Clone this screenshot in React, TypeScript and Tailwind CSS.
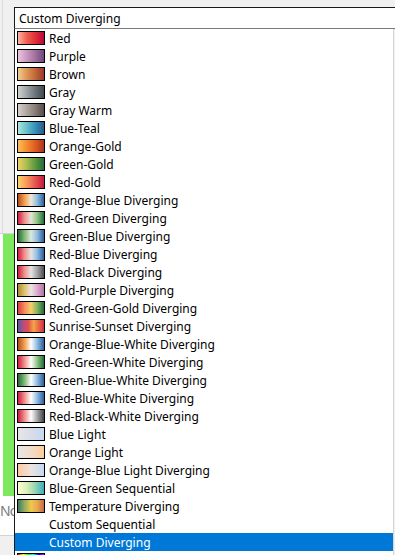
import React from "react";

type Ramp = { name: string; swatch?: string; selected?: boolean };

const ramps: Ramp[] = [
  { name: "Red", swatch: "bg-[linear-gradient(to_right,#fdb4a4,#f06050,#e03038,#b80838)]" },
  { name: "Purple", swatch: "bg-[linear-gradient(to_right,#ecc4e2,#c898c0,#a070a0,#6e4878)]" },
  { name: "Brown", swatch: "bg-[linear-gradient(to_right,#f2cc90,#dc9658,#c06838,#98382c)]" },
  { name: "Gray", swatch: "bg-[linear-gradient(to_right,#d0d2d2,#9ea4a8,#6c747a,#404850)]" },
  { name: "Gray Warm", swatch: "bg-[linear-gradient(to_right,#d8d0cc,#b0a6a2,#867c78,#544a4a)]" },
  { name: "Blue-Teal", swatch: "bg-[linear-gradient(to_right,#b0e4e0,#68c0cc,#3690b8,#2a5888)]" },
  { name: "Orange-Gold", swatch: "bg-[linear-gradient(to_right,#fac058,#f48c30,#e05c20,#a83420)]" },
  { name: "Green-Gold", swatch: "bg-[linear-gradient(to_right,#f2d064,#a8bc50,#5c9840,#226c3c)]" },
  { name: "Red-Gold", swatch: "bg-[linear-gradient(to_right,#fad468,#f8985c,#e65450,#c01c40)]" },
  { name: "Orange-Blue Diverging", swatch: "bg-[linear-gradient(to_right,#b84c1c,#f0a050,#f2e8d8,#88b8dc,#2c5e98)]" },
  { name: "Red-Green Diverging", swatch: "bg-[linear-gradient(to_right,#d01c40,#f0908c,#e4e4d8,#8cc080,#1e6c3a)]" },
  { name: "Green-Blue Diverging", swatch: "bg-[linear-gradient(to_right,#246c34,#80b878,#dce8dc,#8cb8e0,#2c5e98)]" },
  { name: "Red-Blue Diverging", swatch: "bg-[linear-gradient(to_right,#d01c40,#f0908c,#e8e4e4,#8cb8e0,#2c5e98)]" },
  { name: "Red-Black Diverging", swatch: "bg-[linear-gradient(to_right,#d01c40,#f0908c,#e4e4e4,#a0a0a0,#4a4e52)]" },
  { name: "Gold-Purple Diverging", swatch: "bg-[linear-gradient(to_right,#ae8a2c,#dcc470,#ece4e4,#dca8cc,#b070a8)]" },
  { name: "Red-Green-Gold Diverging", swatch: "bg-[linear-gradient(to_right,#e03c44,#f48c5c,#f4d068,#80b060,#1e6c3a)]" },
  { name: "Sunrise-Sunset Diverging", swatch: "bg-[linear-gradient(to_right,#4c5ca8,#b84c80,#e05050,#f4a448,#e86848,#c83040)]" },
  { name: "Orange-Blue-White Diverging", swatch: "bg-[linear-gradient(to_right,#b84c1c,#f0a050,#ffffff,#88b8dc,#2c5e98)]" },
  { name: "Red-Green-White Diverging", swatch: "bg-[linear-gradient(to_right,#d01c40,#f0908c,#ffffff,#8cc080,#1e6c3a)]" },
  { name: "Green-Blue-White Diverging", swatch: "bg-[linear-gradient(to_right,#246c34,#80b878,#ffffff,#8cb8e0,#2c5e98)]" },
  { name: "Red-Blue-White Diverging", swatch: "bg-[linear-gradient(to_right,#d01c40,#f0908c,#ffffff,#8cb8e0,#2c5e98)]" },
  { name: "Red-Black-White Diverging", swatch: "bg-[linear-gradient(to_right,#d01c40,#f0908c,#ffffff,#a0a0a0,#3c4044)]" },
  { name: "Blue Light", swatch: "bg-[linear-gradient(to_right,#e6e6e6,#d8dee8,#c4d8f2)]" },
  { name: "Orange Light", swatch: "bg-[linear-gradient(to_right,#e6e6e6,#f0dccc,#ffcc98)]" },
  { name: "Orange-Blue Light Diverging", swatch: "bg-[linear-gradient(to_right,#ffc8a0,#ece4dc,#c4d8f2)]" },
  { name: "Blue-Green Sequential", swatch: "bg-[linear-gradient(to_right,#fefed0,#dcf0b8,#94d4b4,#3cacbc)]" },
  { name: "Temperature Diverging", swatch: "bg-[linear-gradient(to_right,#3c7a64,#92ac60,#ecca48,#e8a650,#c46a44)]" },
  { name: "Custom Sequential" },
  { name: "Custom Diverging", selected: true },
];

const App: React.FC = () => {
  return (
    <div className="w-[395px] h-[555px] overflow-hidden bg-[#f0f0f0] flex font-['Noto_Sans',sans-serif] text-[12px] leading-none text-black">
      {/* Panel behind the popup */}
      <div className="w-[14px] shrink-0 flex flex-col">
        <div className="h-[233px] pl-[2px]">
          <div className="h-full border-l border-[#dcdcdc]" />
        </div>
        <div className="h-[303px] bg-white border-t border-b border-[#d2d2d2] flex flex-col">
          <div className="ml-[3px] h-[262px] bg-[#7ee85f]" />
          <div className="mt-[8px] text-[14px] tracking-[-1px] text-[#7a7a7a] whitespace-nowrap">No</div>
        </div>
        <div className="flex-1" />
      </div>

      {/* Combo box with open list */}
      <div className="flex-1 pt-[7px] flex flex-col min-w-0">
        <div className="h-[22px] shrink-0 bg-white border-t border-l border-t-[#1a1a1a] border-l-[#1a1a1a] border-b border-b-[#7a7a7a] flex items-center pl-[4px] pt-[2px]">
          Custom Diverging
        </div>
        <div className="mr-[1px] bg-white border-l border-[#1a1a1a] border-r border-r-[#d6d6d6] flex flex-col">
          {ramps.map((r) => (
            <div
              key={r.name}
              className={`h-[18px] shrink-0 flex items-center pl-[2px] whitespace-nowrap ${
                r.selected ? "bg-[#0078d7] text-white" : ""
              }`}
            >
              {r.swatch ? (
                <span className={`w-[28px] h-[14px] shrink-0 border border-black ${r.swatch}`} />
              ) : (
                <span className="w-[28px] h-[14px] shrink-0" />
              )}
              <span className="ml-[4px] pt-[2px]">{r.name}</span>
            </div>
          ))}
          {/* next entry, only its swatch's top edge shows */}
          <div className="h-[18px] shrink-0 flex items-center pl-[2px]">
            <span className="w-[28px] h-[14px] shrink-0 border border-black bg-[linear-gradient(to_right,#ff0000,#ffff00,#00ff00,#00ffff,#0000ff,#ff00ff)]" />
          </div>
        </div>
      </div>
    </div>
  );
};

export default App;
